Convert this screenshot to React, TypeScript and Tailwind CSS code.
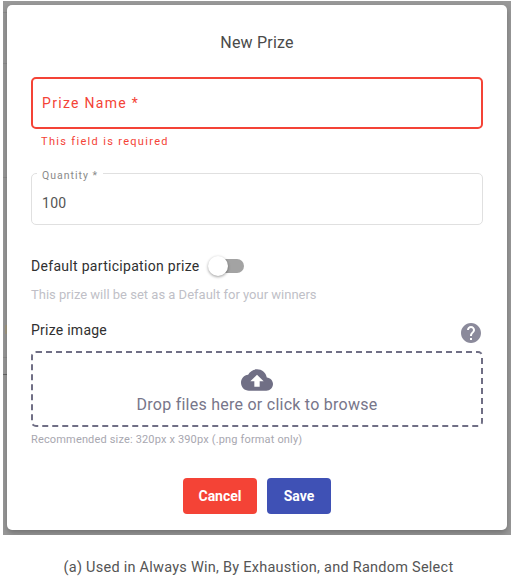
const App = () => {
  return (
    <div className="w-[516px] h-[584px] bg-white overflow-hidden font-['Roboto',sans-serif]">
      {/* BACKDROP */}
      <div className="relative ml-[3px] mt-px w-[508px] h-[534px] bg-[#999999] pl-1 pt-1 overflow-hidden">
        {/* page behind the backdrop, only a sliver shows */}
        <div className="absolute left-0 top-[11px] w-1 h-px bg-[#8c8c8c]"></div>
        <div className="absolute left-0 top-[62px] w-1 h-px bg-[#8c8c8c]"></div>
        <div className="absolute left-0 top-[176px] w-1 h-px bg-[#8c8c8c]"></div>
        <div className="absolute left-[2px] top-[324px] w-[2px] h-[9px] bg-[#a39a84]"></div>
        <div className="absolute left-0 top-[356px] w-1 h-px bg-[#8c8c8c]"></div>
        <div className="absolute left-0 top-[373px] w-1 h-px bg-[#666666]"></div>
        {/* DIALOG */}
        <div className="relative w-[500px] h-[525px] bg-white rounded-[5px] px-6 flex flex-col shadow-[0_3px_6px_rgba(0,0,0,0.25)]">
          <h2 className="mt-[26px] h-6 text-center text-[16px] leading-6 tracking-[0.2px] text-[#4a4a4a]">New Prize</h2>

          {/* PRIZE NAME */}
          <div className="mt-[22px] w-[452px] h-[52px] rounded-[5px] border-2 border-[#f44336] flex items-center px-[9px]">
            <span className="text-[14px] tracking-[1.3px] text-[#f44336]">Prize Name *</span>
          </div>
          <p className="mt-[5px] ml-2.5 text-[11px] leading-[15px] tracking-[1.32px] text-[#f44336]">This field is required</p>

          {/* QUANTITY */}
          <div className="relative mt-[24px] w-[452px] h-[52px] rounded-[5px] border border-[#e0e0e0] flex items-center px-2.5 pt-2">
            <span className="absolute -top-1 left-[5px] bg-white px-[5px] text-[10.5px] leading-3 tracking-[1px] text-[#8a8a8a]">Quantity *</span>
            <span className="text-[14px] tracking-[0.3px] text-[#555555]">100</span>
          </div>

          {/* DEFAULT TOGGLE */}
          <div className="mt-[29px] h-6 flex items-center">
            <span className="text-[14px] tracking-[0.3px] text-[#303030]">Default participation prize</span>
            <div className="relative ml-2.5 w-[34px] h-3.5 rounded-full bg-[#a3a3a3]">
              <div className="absolute -left-[2px] -top-[3px] w-5 h-5 rounded-full bg-white shadow-[0_1px_3px_rgba(0,0,0,0.4)]"></div>
            </div>
          </div>
          <p className="mt-2 text-[13px] leading-[18px] text-[#c0bfc7]">This prize will be set as a Default for your winners</p>

          {/* PRIZE IMAGE */}
          <div className="mt-4 h-[31px] flex items-start justify-between">
            <span className="text-[14px] leading-5 tracking-[0.25px] text-[#303030]">Prize image</span>
            <svg viewBox="0 0 24 24" className="w-6 h-6 mt-px fill-[#8b8a9b]">
              <path d="M12 2C6.48 2 2 6.48 2 12s4.48 10 10 10 10-4.48 10-10S17.52 2 12 2zm1 17h-2v-2h2v2zm2.07-7.75l-.9.92C13.45 12.9 13 13.5 13 15h-2v-.5c0-1.1.45-2.1 1.17-2.83l1.24-1.26c.37-.36.59-.86.59-1.41 0-1.1-.9-2-2-2s-2 .9-2 2H8c0-2.21 1.79-4 4-4s4 1.79 4 4c0 .88-.36 1.68-.93 2.25z" />
            </svg>
          </div>
          <div className="w-[452px] h-[76px] rounded-[5px] border-2 border-dashed border-[#706f85] flex flex-col items-center pt-[11px]">
            <svg viewBox="0 0 24 24" className="w-8 h-8 -mb-px fill-[#706f85]">
              <path d="M19.35 10.04C18.67 6.59 15.64 4 12 4 9.11 4 6.6 5.64 5.35 8.04 2.34 8.36 0 10.91 0 14c0 3.31 2.69 6 6 6h13c2.76 0 5-2.24 5-5 0-2.64-2.05-4.78-4.65-4.96zM14 13v4h-4v-4H7l5-5 5 5h-3z" />
            </svg>
            <span className="text-[16px] leading-5 tracking-[0.25px] text-[#77768a]">Drop files here or click to browse</span>
          </div>
          <p className="mt-[5px] text-[11px] leading-[16px] tracking-[0.16px] text-[#a8a7b0]">Recommended size: 320px x 390px (.png format only)</p>

          {/* ACTIONS */}
          <div className="mt-[30px] flex justify-center gap-2.5">
            <button className="w-[74px] h-9 rounded-[4px] bg-[#f44336] text-[14px] font-bold text-white">Cancel</button>
            <button className="w-16 h-9 rounded-[4px] bg-[#3f51b5] text-[14px] font-bold text-white">Save</button>
          </div>
        </div>
      </div>

      <p className="mt-[23px] text-center text-[14.5px] leading-5 tracking-[0.25px] text-[#555555] pl-px">(a) Used in Always Win, By Exhaustion, and Random Select</p>
    </div>
  )
}

export default App
